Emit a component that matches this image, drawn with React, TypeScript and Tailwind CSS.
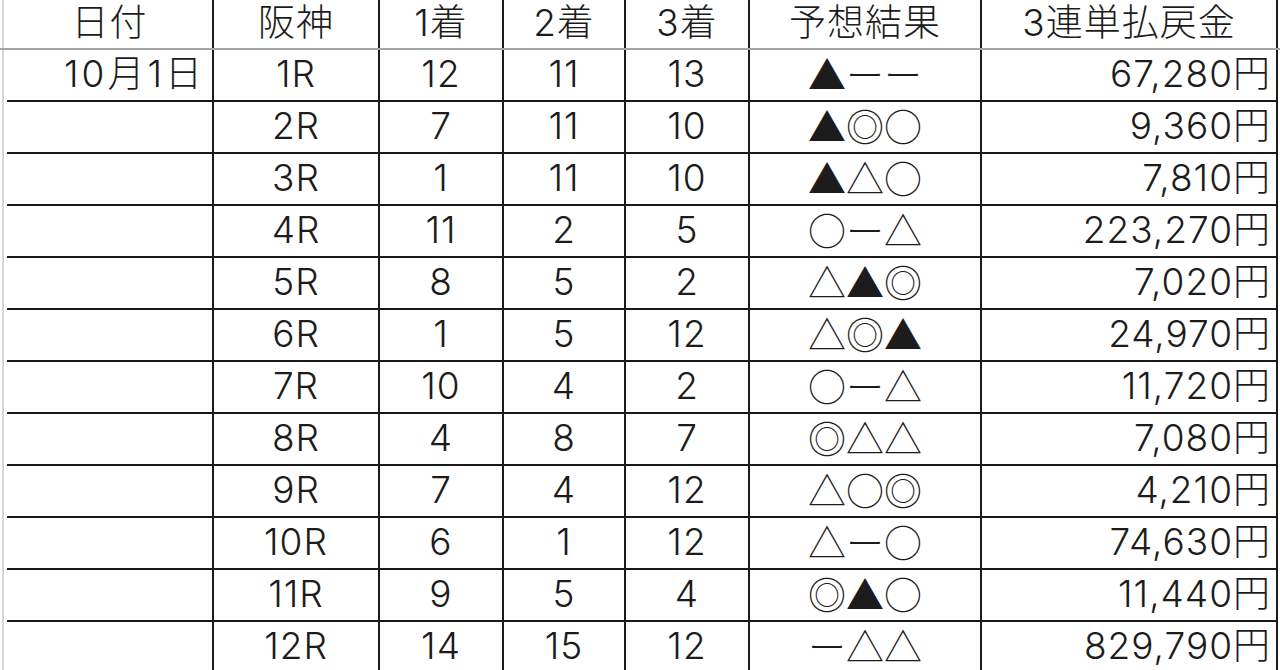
import React from "react";

const cols = [
  "w-[207px]",
  "w-[166px]",
  "w-[124px]",
  "w-[122px]",
  "w-[124px]",
  "w-[232px]",
  "w-[296px]",
];

const headers = ["日付", "阪神", "1着", "2着", "3着", "予想結果", "3連単払戻金"];

const rows: string[][] = [
  ["10月1日", "1R", "12", "11", "13", "▲ーー", "67,280円"],
  ["", "2R", "7", "11", "10", "▲◎○", "9,360円"],
  ["", "3R", "1", "11", "10", "▲△○", "7,810円"],
  ["", "4R", "11", "2", "5", "○ー△", "223,270円"],
  ["", "5R", "8", "5", "2", "△▲◎", "7,020円"],
  ["", "6R", "1", "5", "12", "△◎▲", "24,970円"],
  ["", "7R", "10", "4", "2", "○ー△", "11,720円"],
  ["", "8R", "4", "8", "7", "◎△△", "7,080円"],
  ["", "9R", "7", "4", "12", "△○◎", "4,210円"],
  ["", "10R", "6", "1", "12", "△ー○", "74,630円"],
  ["", "11R", "9", "5", "4", "◎▲○", "11,440円"],
  ["", "12R", "14", "15", "12", "ー△△", "829,790円"],
];

function Gutter() {
  return (
    <div className="w-[7px] shrink-0 flex">
      <div className="ml-[2px] w-[2px] bg-[#d6d6d6]" />
    </div>
  );
}

export default function App() {
  return (
    <div
      className="w-[1280px] h-[670px] overflow-hidden bg-white text-[#1c1c1c] text-[37px] tracking-[1px] font-light leading-none"
      style={{ fontFamily: '"Inter", "Noto Sans CJK JP", sans-serif' }}
    >
      {/* header */}
      <div className="flex h-[48px]">
        <Gutter />
        {headers.map((h, i) => (
          <div
            key={i}
            className={`${cols[i]} shrink-0 border-r-2 border-[#1a1a1a] flex items-center justify-center pb-[3px]`}
          >
            {h}
          </div>
        ))}
      </div>
      <div className="h-[2px] bg-[#a3a3a3]" />

      {/* rows */}
      {rows.map((r, ri) => (
        <div key={ri} className="flex h-[52px]">
          <Gutter />
          <div className="flex border-b-2 border-[#1a1a1a]">
            {r.map((c, ci) => {
              let align = "justify-center";
              if (ci === 0) align = "justify-end pr-[7px] tracking-[3px]";
              if (ci === 6) align = "justify-end pr-[5px]";
              return (
                <div
                  key={ci}
                  className={`${cols[ci]} shrink-0 border-r-2 border-[#1a1a1a] flex items-center ${align} pb-[4px]`}
                >
                  {ci === 5 ? (
                    <span
                      className="text-[38px] tracking-normal"
                      style={{ fontFamily: '"Noto Sans CJK JP", sans-serif' }}
                    >
                      {c}
                    </span>
                  ) : (
                    c
                  )}
                </div>
              );
            })}
          </div>
        </div>
      ))}
    </div>
  );
}
